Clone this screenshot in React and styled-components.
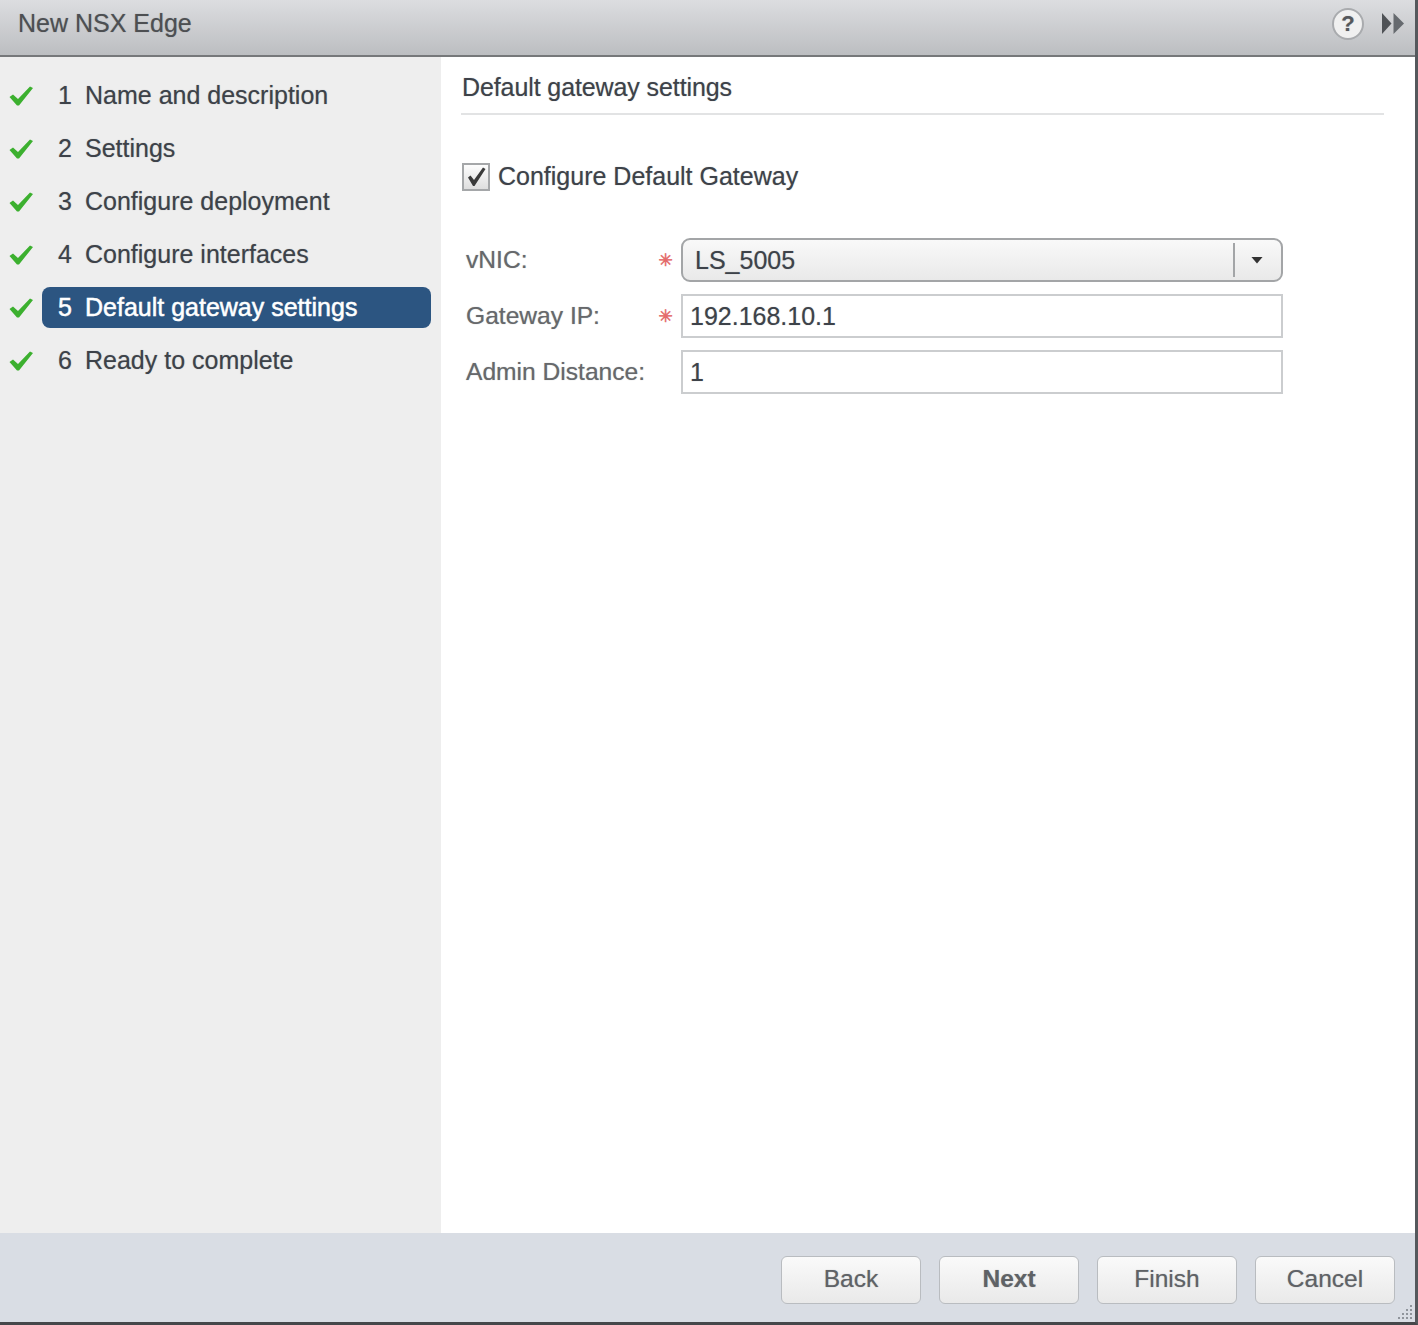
import React from 'react'
import styled, { createGlobalStyle } from 'styled-components'

const GlobalStyle = createGlobalStyle`
  html, body {
    margin: 0;
    padding: 0;
    background: #fff;
  }
  * {
    box-sizing: border-box;
  }
`

const steps = [
  { num: 1, label: 'Name and description' },
  { num: 2, label: 'Settings' },
  { num: 3, label: 'Configure deployment' },
  { num: 4, label: 'Configure interfaces' },
  { num: 5, label: 'Default gateway settings', active: true },
  { num: 6, label: 'Ready to complete' },
]

const Check = () => (
  <CheckIcon viewBox="0 0 24 20">
    <path d="M0.5 11 L4 8.5 L9 13 L21 0.5 L24 2 L10 19.5 L8 19.5 Z" fill="#3cb02f" />
  </CheckIcon>
)

const App = () => {
  return <Dialog>
    <GlobalStyle />
    <Header>
      <Title>New NSX Edge</Title>
      <HelpButton>?</HelpButton>
      <svg width="23" height="21" viewBox="0 0 23 21">
        <path d="M1 0 L10.5 10.5 L1 21 Z" fill="#4f5256" />
        <path d="M12.5 0 L23 10.5 L12.5 21 Z" fill="#666a6f" />
      </svg>
    </Header>
    <Body>
      <Sidebar>
        {steps.map((step) => (
          <Step key={step.num}>
            <Check />
            <StepLabel $active={step.active}>
              <StepNum>{step.num}</StepNum>
              <span>{step.label}</span>
            </StepLabel>
          </Step>
        ))}
      </Sidebar>
      <Content>
        <Heading>Default gateway settings</Heading>
        <CheckRow>
          <CheckBox>
            <svg width="22" height="22" viewBox="0 0 22 22">
              <path d="M3 11.5 L5.5 9.5 L9 14 L18 1.5 L20.5 3 L9.5 20 L8 20 Z" fill="#3a3a3a" />
            </svg>
          </CheckBox>
          <CheckLabel>Configure Default Gateway</CheckLabel>
        </CheckRow>
        <Form>
          <FieldLabel>vNIC:</FieldLabel>
          <Required>✳</Required>
          <Select>
            <SelectValue>LS_5005</SelectValue>
            <SelectArrow />
          </Select>
          <FieldLabel>Gateway IP:</FieldLabel>
          <Required>✳</Required>
          <Input>192.168.10.1</Input>
          <FieldLabel>Admin Distance:</FieldLabel>
          <span />
          <Input>1</Input>
        </Form>
      </Content>
    </Body>
    <Footer>
      <Button>Back</Button>
      <Button $primary>Next</Button>
      <Button>Finish</Button>
      <Button>Cancel</Button>
      <Grip viewBox="0 0 18 18">
        <path d="M14 2h2v2h-2z M10 6h2v2h-2z M14 6h2v2h-2z M6 10h2v2H6z M10 10h2v2h-2z M14 10h2v2h-2z M2 14h2v2H2z M6 14h2v2H6z M10 14h2v2h-2z M14 14h2v2h-2z" fill="#8f949b" />
      </Grip>
    </Footer>
  </Dialog>
}

const Dialog = styled.div`
  width: 1418px;
  height: 1325px;
  display: flex;
  flex-direction: column;
  overflow: hidden;
  background: #fff;
  border-right: 3px solid #55585c;
  border-bottom: 3px solid #45474a;
  font-family: 'Liberation Sans', Arial, sans-serif;
  text-shadow: 0 0 1px rgba(60, 66, 73, 0.45);
`

const Header = styled.div`
  flex: 0 0 57px;
  display: flex;
  align-items: center;
  padding: 0 11px 8px 18px;
  gap: 17px;
  background: linear-gradient(#dcdde0, #bcbec1);
  border-bottom: 2px solid #76787a;
`

const Title = styled.div`
  flex: 1;
  font-size: 25px;
  color: #4d4f52;
`

const HelpButton = styled.div`
  width: 32px;
  height: 32px;
  border-radius: 50%;
  display: flex;
  align-items: center;
  justify-content: center;
  background: #f0f0f0;
  border: 2px solid #a9abae;
  font-size: 22px;
  font-weight: 700;
  color: #55585c;
`

const Body = styled.div`
  flex: 1;
  display: flex;
  min-height: 0;
`

const Sidebar = styled.div`
  flex: 0 0 441px;
  background: #eeeeee;
  padding: 18px 10px 0 9px;
  display: flex;
  flex-direction: column;
  gap: 12px;
`

const Step = styled.div`
  display: flex;
  align-items: center;
  height: 41px;
  gap: 9px;
`

const CheckIcon = styled.svg`
  flex: 0 0 24px;
  width: 24px;
  height: 20px;
`

const StepLabel = styled.div`
  flex: 1;
  height: 41px;
  display: flex;
  align-items: center;
  padding-left: 16px;
  border-radius: 8px;
  font-size: 25px;
  background: ${(p) => (p.$active ? '#2c5581' : 'transparent')};
  color: ${(p) => (p.$active ? '#fff' : '#3d4249')};
  -webkit-text-stroke: ${(p) => (p.$active ? '0.5px #fff' : '0')};
  text-shadow: ${(p) => (p.$active ? 'none' : '0 0 1px rgba(60, 66, 73, 0.45)')};
`

const StepNum = styled.span`
  width: 27px;
`

const Content = styled.div`
  flex: 1;
  padding: 14px 31px 0 21px;
`

const Heading = styled.div`
  font-size: 25px;
  letter-spacing: -0.1px;
  color: #3d4249;
  height: 44px;
  line-height: 32px;
  margin-left: -1px;
  padding-left: 1px;
  border-bottom: 2px solid #e2e3e4;
`

const CheckRow = styled.div`
  display: flex;
  align-items: center;
  gap: 8px;
  margin-top: 47px;
`

const CheckBox = styled.div`
  width: 28px;
  height: 28px;
  display: flex;
  align-items: center;
  justify-content: center;
  border: 2px solid #a5a7a9;
  background: linear-gradient(#fdfdfd, #dedede);
`

const CheckLabel = styled.div`
  font-size: 25px;
  color: #3d4249;
`

const Form = styled.div`
  display: grid;
  grid-template-columns: 189px 26px 602px;
  grid-auto-rows: 44px;
  row-gap: 12px;
  align-items: center;
  margin-top: 47px;
  padding-left: 4px;
`

const FieldLabel = styled.div`
  font-size: 24.6px;
  color: #66686b;
`

const Required = styled.div`
  font-family: 'DejaVu Sans', sans-serif;
  font-size: 17px;
  color: #e46a6a;
  -webkit-text-stroke: 0.6px #e46a6a;
  text-shadow: none;
  text-align: center;
  padding-right: 5px;
`

const Select = styled.div`
  height: 44px;
  display: flex;
  align-items: stretch;
  border: 2px solid #a3a5a7;
  border-radius: 9px;
  background: linear-gradient(#f9f9f9, #e9e9e9);
`

const SelectValue = styled.div`
  flex: 1;
  display: flex;
  align-items: center;
  padding-left: 12px;
  font-size: 25px;
  color: #3d4249;
  margin: 3px 0;
  border-right: 2px solid #a3a5a7;
`

const SelectArrow = styled.div`
  flex: 0 0 12px;
  align-self: center;
  height: 7px;
  margin: 0 18px 0 16px;
  background: #333;
  clip-path: polygon(0 0, 100% 0, 50% 100%);
`

const Input = styled.div`
  height: 44px;
  display: flex;
  align-items: center;
  padding-left: 7px;
  font-size: 25px;
  color: #3d4249;
  background: #fff;
  border: 2px solid #cbcdcf;
`

const Footer = styled.div`
  flex: 0 0 89px;
  display: flex;
  justify-content: flex-end;
  gap: 18px;
  padding: 23px 20px 0 0;
  background: #d9dde4;
  position: relative;
`

const Button = styled.div`
  width: 140px;
  height: 48px;
  display: flex;
  align-items: center;
  justify-content: center;
  padding-bottom: 2px;
  border: 1px solid #b9bcc0;
  border-radius: 6px;
  background: linear-gradient(#fafafa, #e9e9e9);
  font-size: 24.5px;
  color: #5f6266;
  font-weight: ${(p) => (p.$primary ? 700 : 400)};
`

const Grip = styled.svg`
  position: absolute;
  right: 1px;
  bottom: 1px;
  width: 18px;
  height: 18px;
`

export default App
